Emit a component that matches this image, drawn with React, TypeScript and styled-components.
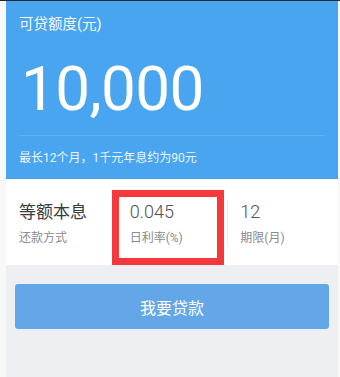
import React from "react";
import styled, { createGlobalStyle } from "styled-components";

const GlobalStyle = createGlobalStyle`
  html, body {
    margin: 0;
    padding: 0;
    background: #f8f8f9;
    font-family: Roboto, "Noto Sans CJK SC", "Noto Sans", sans-serif;
  }
`;

const Page = styled.div`
  border-top: 1px solid #23262b;
  min-height: 376px;
  display: flex;
`;

const Main = styled.main`
  margin-left: 6px;
  width: 332px;
  min-height: 376px;
  background: #eeeff3;
  display: flex;
  flex-direction: column;
`;

const Hero = styled.section`
  background: #4aa5f0;
  border-bottom: 1px solid #479fe6;
  padding: 14px 13px 0;
  height: 163px;
  color: #fff;
  display: flex;
  flex-direction: column;
`;

const Title = styled.div`
  font-size: 14.5px;
  line-height: 20px;
  opacity: 0.95;
`;

const Amount = styled.div`
  margin: 23px 0 0 2px;
  font-size: 62px;
  line-height: 62px;
  font-weight: 400;
  letter-spacing: -0.6px;
`;

const Divider = styled.div`
  margin-top: 15px;
  height: 1px;
  background: #62b2f3;
`;

const Note = styled.div`
  margin-top: 14px;
  font-size: 12px;
  line-height: 16px;
  opacity: 0.9;
`;

const Stats = styled.section`
  position: relative;
  height: 86px;
  background: #fff;
  display: grid;
  grid-template-columns: repeat(3, 1fr);
`;

const Stat = styled.div<{ $divided?: boolean }>`
  padding: 21px 12px 0 13px;
  position: relative;
  &::before {
    content: "";
    display: ${(p) => (p.$divided ? "block" : "none")};
    position: absolute;
    left: 0;
    top: 21px;
    height: 45px;
    width: 1px;
    background: #ececec;
  }
`;

const Value = styled.div<{ $big?: boolean }>`
  font-size: ${(p) => (p.$big ? "17px" : "18px")};
  font-weight: ${(p) => (p.$big ? 400 : 300)};
  line-height: 24px;
  color: ${(p) => (p.$big ? "#3a3a3a" : "#505050")};
`;

const Label = styled.div`
  margin-top: 6px;
  font-size: 12px;
  line-height: 16px;
  color: #8a8a8a;
`;

const Highlight = styled.div`
  position: absolute;
  left: 106px;
  top: 11px;
  width: 112px;
  height: 75px;
  box-sizing: border-box;
  border: 7px solid #f5383b;
  pointer-events: none;
`;

const Actions = styled.div`
  padding: 19px 9px;
`;

const Button = styled.button`
  width: 100%;
  height: 45px;
  border: none;
  border-radius: 3px;
  background: #64a7e8;
  color: #fff;
  font-family: inherit;
  font-size: 16px;
  cursor: pointer;
`;

const stats = [
  { value: "等额本息", label: "还款方式", big: true },
  { value: "0.045", label: "日利率(%)" },
  { value: "12", label: "期限(月)", divided: true },
];

export default function App() {
  return (
    <>
      <GlobalStyle />
      <Page>
        <Main>
          <Hero>
            <Title>可贷额度(元)</Title>
            <Amount>10,000</Amount>
            <Divider />
            <Note>最长12个月，1千元年息约为90元</Note>
          </Hero>
          <Stats>
            {stats.map((s) => (
              <Stat key={s.label} $divided={s.divided}>
                <Value $big={s.big}>{s.value}</Value>
                <Label>{s.label}</Label>
              </Stat>
            ))}
            <Highlight />
          </Stats>
          <Actions>
            <Button>我要贷款</Button>
          </Actions>
        </Main>
      </Page>
    </>
  );
}
